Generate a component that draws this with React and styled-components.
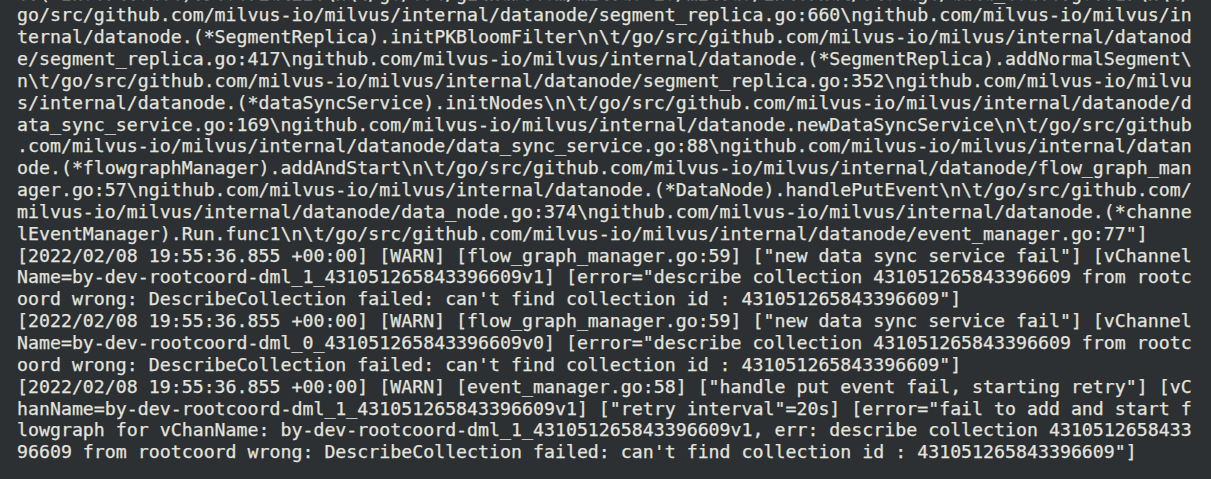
import React from "react";
import styled, { createGlobalStyle } from "styled-components";

const GlobalStyle = createGlobalStyle`
  html, body {
    margin: 0;
    padding: 0;
    background-color: #2c3033;
    overflow: hidden;
  }
`;

const Terminal = styled.div`
  width: 1211px;
  height: 479px;
  box-sizing: border-box;
  padding: 0 0 0 17px;
  background-color: #2c3033;
  overflow: hidden;
`;

const Output = styled.div`
  margin-top: -17.5px;
  font-family: "DejaVu Sans Mono", "Liberation Mono", monospace;
  font-size: 18.24px;
  line-height: 21.85px;
  color: #e3e3df;
  -webkit-text-stroke: 0.25px #e3e3df;
`;

const Line = styled.div`
  white-space: pre;
  height: 21.85px;
`;

// terminal rows, already wrapped at 107 columns
const lines = [
  "e.(*InsertCodec).Deserialize\\n\\t/go/src/github.com/milvus-io/milvus/internal/storage/data_codec.go:317\\n\\t/",
  "go/src/github.com/milvus-io/milvus/internal/datanode/segment_replica.go:660\\ngithub.com/milvus-io/milvus/in",
  "ternal/datanode.(*SegmentReplica).initPKBloomFilter\\n\\t/go/src/github.com/milvus-io/milvus/internal/datanod",
  "e/segment_replica.go:417\\ngithub.com/milvus-io/milvus/internal/datanode.(*SegmentReplica).addNormalSegment\\",
  "n\\t/go/src/github.com/milvus-io/milvus/internal/datanode/segment_replica.go:352\\ngithub.com/milvus-io/milvu",
  "s/internal/datanode.(*dataSyncService).initNodes\\n\\t/go/src/github.com/milvus-io/milvus/internal/datanode/d",
  "ata_sync_service.go:169\\ngithub.com/milvus-io/milvus/internal/datanode.newDataSyncService\\n\\t/go/src/github",
  ".com/milvus-io/milvus/internal/datanode/data_sync_service.go:88\\ngithub.com/milvus-io/milvus/internal/datan",
  "ode.(*flowgraphManager).addAndStart\\n\\t/go/src/github.com/milvus-io/milvus/internal/datanode/flow_graph_man",
  "ager.go:57\\ngithub.com/milvus-io/milvus/internal/datanode.(*DataNode).handlePutEvent\\n\\t/go/src/github.com/",
  "milvus-io/milvus/internal/datanode/data_node.go:374\\ngithub.com/milvus-io/milvus/internal/datanode.(*channe",
  "lEventManager).Run.func1\\n\\t/go/src/github.com/milvus-io/milvus/internal/datanode/event_manager.go:77\"]",
  "[2022/02/08 19:55:36.855 +00:00] [WARN] [flow_graph_manager.go:59] [\"new data sync service fail\"] [vChannel",
  "Name=by-dev-rootcoord-dml_1_431051265843396609v1] [error=\"describe collection 431051265843396609 from rootc",
  "oord wrong: DescribeCollection failed: can't find collection id : 431051265843396609\"]",
  "[2022/02/08 19:55:36.855 +00:00] [WARN] [flow_graph_manager.go:59] [\"new data sync service fail\"] [vChannel",
  "Name=by-dev-rootcoord-dml_0_431051265843396609v0] [error=\"describe collection 431051265843396609 from rootc",
  "oord wrong: DescribeCollection failed: can't find collection id : 431051265843396609\"]",
  "[2022/02/08 19:55:36.855 +00:00] [WARN] [event_manager.go:58] [\"handle put event fail, starting retry\"] [vC",
  "hanName=by-dev-rootcoord-dml_1_431051265843396609v1] [\"retry interval\"=20s] [error=\"fail to add and start f",
  "lowgraph for vChanName: by-dev-rootcoord-dml_1_431051265843396609v1, err: describe collection 4310512658433",
  "96609 from rootcoord wrong: DescribeCollection failed: can't find collection id : 431051265843396609\"]",
];

export default function App() {
  return (
    <>
      <GlobalStyle />
      <Terminal>
        <Output>
          {lines.map((text, i) => (
            <Line key={i}>{text}</Line>
          ))}
        </Output>
      </Terminal>
    </>
  );
}
